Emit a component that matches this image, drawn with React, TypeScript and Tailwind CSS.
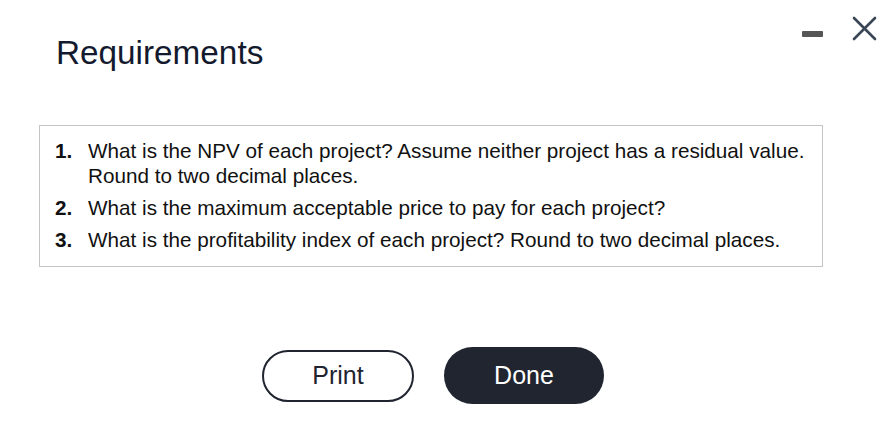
const ITEMS = [
  'What is the NPV of each project? Assume neither project has a residual value. Round to two decimal places.',
  'What is the maximum acceptable price to pay for each project?',
  'What is the profitability index of each project? Round to two decimal places.',
]

export default function App() {
  return (
    <div className="w-[892px] h-[440px] bg-white font-['Liberation_Sans',Arial,sans-serif] text-[#111] overflow-hidden">
      <div className="relative pl-[56px] pt-[33px]">
        <h1 className="text-[33.3px] leading-[40px] text-[#141a2e]">Requirements</h1>
        <div className="absolute top-[31px] left-[802px] w-[21px] h-[6px] bg-[#555] rounded-[1px]" />
        <svg className="absolute top-[16px] left-[852px]" width="25" height="25" viewBox="0 0 25 25">
          <path d="M2 2 L23 23 M23 2 L2 23" stroke="#3a4656" strokeWidth="2.6" strokeLinecap="round" fill="none" />
        </svg>
      </div>

      <div className="mt-[52px] ml-[39px] w-[784px] border border-[#c4c4c4] pl-[15px] pr-[8px] pt-[12px] pb-[14px]">
        <ol className="flex flex-col gap-[7px] text-[20.7px] leading-[25px]">
          {ITEMS.map((t, i) => (
            <li key={i} className="flex">
              <span className="w-[33px] shrink-0 font-bold">{i + 1}.</span>
              <span>{t}</span>
            </li>
          ))}
        </ol>
      </div>

      <div className="flex items-center gap-[30px] mt-[80px] pl-[262px]">
        <button className="w-[152px] h-[52px] rounded-full border-[2.5px] border-[#1f2430] text-[25px] text-[#1f2430]">Print</button>
        <button className="w-[160px] h-[57px] rounded-full bg-[#212530] text-white text-[25px]">Done</button>
      </div>
    </div>
  )
}
